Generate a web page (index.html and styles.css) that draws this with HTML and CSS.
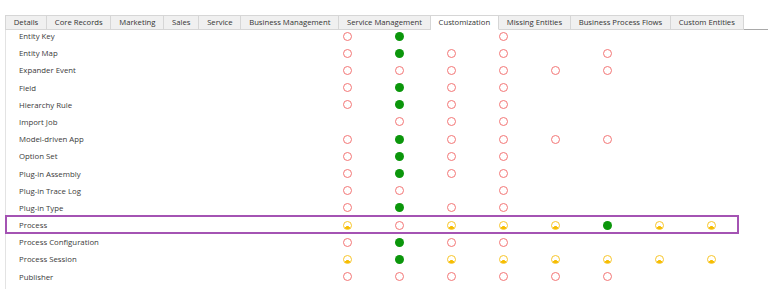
FILE: index.html
```html
<!DOCTYPE html>
<html lang="en">
<head>
    <meta charset="UTF-8">
    <title>Solution Components</title>
    <link rel="stylesheet" href="styles.css">
</head>
<body>

    <div class="solution-view">
        <!-- Tab strip -->
        <ul class="tabs">
            <li class="tab">Details</li>
            <li class="tab">Core Records</li>
            <li class="tab">Marketing</li>
            <li class="tab">Sales</li>
            <li class="tab">Service</li>
            <li class="tab">Business Management</li>
            <li class="tab">Service Management</li>
            <li class="tab active">Customization</li>
            <li class="tab">Missing Entities</li>
            <li class="tab">Business Process Flows</li>
            <li class="tab">Custom Entities</li>
        </ul>

        <!-- Component grid: no = missing, ok = present, part = partial -->
        <div class="grid">
            <div class="row"><span class="name">Entity Key</span>
                <span class="cell"><i class="st no"></i></span><span class="cell"><i class="st ok"></i></span><span class="cell"></span><span class="cell"><i class="st no"></i></span>
                <span class="cell"></span><span class="cell"></span><span class="cell"></span><span class="cell"></span>
            </div>
            <div class="row"><span class="name">Entity Map</span>
                <span class="cell"><i class="st no"></i></span><span class="cell"><i class="st ok"></i></span><span class="cell"><i class="st no"></i></span><span class="cell"><i class="st no"></i></span>
                <span class="cell"></span><span class="cell"><i class="st no"></i></span><span class="cell"></span><span class="cell"></span>
            </div>
            <div class="row"><span class="name">Expander Event</span>
                <span class="cell"><i class="st no"></i></span><span class="cell"><i class="st no"></i></span><span class="cell"><i class="st no"></i></span><span class="cell"><i class="st no"></i></span>
                <span class="cell"><i class="st no"></i></span><span class="cell"><i class="st no"></i></span><span class="cell"></span><span class="cell"></span>
            </div>
            <div class="row"><span class="name">Field</span>
                <span class="cell"><i class="st no"></i></span><span class="cell"><i class="st ok"></i></span><span class="cell"><i class="st no"></i></span><span class="cell"><i class="st no"></i></span>
                <span class="cell"></span><span class="cell"></span><span class="cell"></span><span class="cell"></span>
            </div>
            <div class="row"><span class="name">Hierarchy Rule</span>
                <span class="cell"><i class="st no"></i></span><span class="cell"><i class="st ok"></i></span><span class="cell"><i class="st no"></i></span><span class="cell"><i class="st no"></i></span>
                <span class="cell"></span><span class="cell"></span><span class="cell"></span><span class="cell"></span>
            </div>
            <div class="row"><span class="name">Import Job</span>
                <span class="cell"></span><span class="cell"><i class="st no"></i></span><span class="cell"><i class="st no"></i></span><span class="cell"><i class="st no"></i></span>
                <span class="cell"></span><span class="cell"></span><span class="cell"></span><span class="cell"></span>
            </div>
            <div class="row"><span class="name">Model-driven App</span>
                <span class="cell"><i class="st no"></i></span><span class="cell"><i class="st ok"></i></span><span class="cell"><i class="st no"></i></span><span class="cell"><i class="st no"></i></span>
                <span class="cell"><i class="st no"></i></span><span class="cell"><i class="st no"></i></span><span class="cell"></span><span class="cell"></span>
            </div>
            <div class="row"><span class="name">Option Set</span>
                <span class="cell"><i class="st no"></i></span><span class="cell"><i class="st ok"></i></span><span class="cell"><i class="st no"></i></span><span class="cell"><i class="st no"></i></span>
                <span class="cell"></span><span class="cell"></span><span class="cell"></span><span class="cell"></span>
            </div>
            <div class="row"><span class="name">Plug-in Assembly</span>
                <span class="cell"><i class="st no"></i></span><span class="cell"><i class="st ok"></i></span><span class="cell"><i class="st no"></i></span><span class="cell"><i class="st no"></i></span>
                <span class="cell"></span><span class="cell"></span><span class="cell"></span><span class="cell"></span>
            </div>
            <div class="row"><span class="name">Plug-in Trace Log</span>
                <span class="cell"><i class="st no"></i></span><span class="cell"><i class="st no"></i></span><span class="cell"></span><span class="cell"><i class="st no"></i></span>
                <span class="cell"></span><span class="cell"></span><span class="cell"></span><span class="cell"></span>
            </div>
            <div class="row"><span class="name">Plug-in Type</span>
                <span class="cell"><i class="st no"></i></span><span class="cell"><i class="st ok"></i></span><span class="cell"><i class="st no"></i></span><span class="cell"><i class="st no"></i></span>
                <span class="cell"></span><span class="cell"></span><span class="cell"></span><span class="cell"></span>
            </div>
            <div class="row selected"><span class="name">Process</span>
                <span class="cell"><i class="st part"></i></span><span class="cell"><i class="st no"></i></span><span class="cell"><i class="st part"></i></span><span class="cell"><i class="st part"></i></span>
                <span class="cell"><i class="st part"></i></span><span class="cell"><i class="st ok"></i></span><span class="cell"><i class="st part"></i></span><span class="cell"><i class="st part"></i></span>
            </div>
            <div class="row"><span class="name">Process Configuration</span>
                <span class="cell"><i class="st no"></i></span><span class="cell"><i class="st ok"></i></span><span class="cell"><i class="st no"></i></span><span class="cell"><i class="st no"></i></span>
                <span class="cell"></span><span class="cell"></span><span class="cell"></span><span class="cell"></span>
            </div>
            <div class="row"><span class="name">Process Session</span>
                <span class="cell"><i class="st part"></i></span><span class="cell"><i class="st ok"></i></span><span class="cell"><i class="st part"></i></span><span class="cell"><i class="st part"></i></span>
                <span class="cell"><i class="st part"></i></span><span class="cell"><i class="st part"></i></span><span class="cell"><i class="st part"></i></span><span class="cell"><i class="st part"></i></span>
            </div>
            <div class="row"><span class="name">Publisher</span>
                <span class="cell"><i class="st no"></i></span><span class="cell"><i class="st no"></i></span><span class="cell"><i class="st no"></i></span><span class="cell"><i class="st no"></i></span>
                <span class="cell"><i class="st no"></i></span><span class="cell"><i class="st no"></i></span><span class="cell"></span><span class="cell"></span>
            </div>
        </div>
    </div>

</body>
</html>
```

FILE: styles.css
```css
body {
    margin: 0;
    font-family: "Open Sans", "Noto Sans", sans-serif;
    background-color: #fff;
    color: #333;
    overflow: hidden;
}
.solution-view {
    padding: 15px 0 0 5px;
}
.tabs {
    display: flex;
    margin: 0;
    padding: 0;
    list-style: none;
    height: 14px;
    border-bottom: 1px solid #a9a9a9;
}
.tab {
    padding: 0 7.8px;
    font-size: 7.7px;
    line-height: 13px;
    color: #333;
    background-color: #f0f0f0;
    border: 1px solid #d6d6d6;
    border-left: none;
    margin-bottom: -1px;
    white-space: nowrap;
}
.tab:first-child {
    border-left: 1px solid #d6d6d6;
}
.tab.active {
    background-color: #fff;
    border-bottom-color: #fff;
}
.grid {
    border-left: 1px solid #e3e3e3;
    height: 260px;
}
.row {
    display: grid;
    grid-template-columns: 315px repeat(8, 52px);
    width: 731px;
    height: 17.2px;
    align-items: start;
    position: relative;
}
.name {
    padding-left: 13px;
    font-size: 7.8px;
    line-height: 12px;
    color: #3a3a3a;
}
.cell {
    display: flex;
    justify-content: center;
    align-items: center;
    height: 12px;
}
.st {
    display: block;
    width: 9px;
    height: 9px;
    border-radius: 50%;
    box-sizing: border-box;
}
.st.no {
    border: 1.3px solid #f37676;
}
.st.ok {
    background-color: #0b960b;
}
.st.part {
    border: 1.3px solid #f8c62a;
    background: radial-gradient(circle at 50% 100%, #f6bd00 2.6px, transparent 3.1px);
}
/* highlight frame around the selected row */
.row.selected::after {
    content: "";
    position: absolute;
    left: -1px;
    right: -2px;
    top: -4px;
    bottom: 2px;
    border: 2px solid #a453b3;
}
```
